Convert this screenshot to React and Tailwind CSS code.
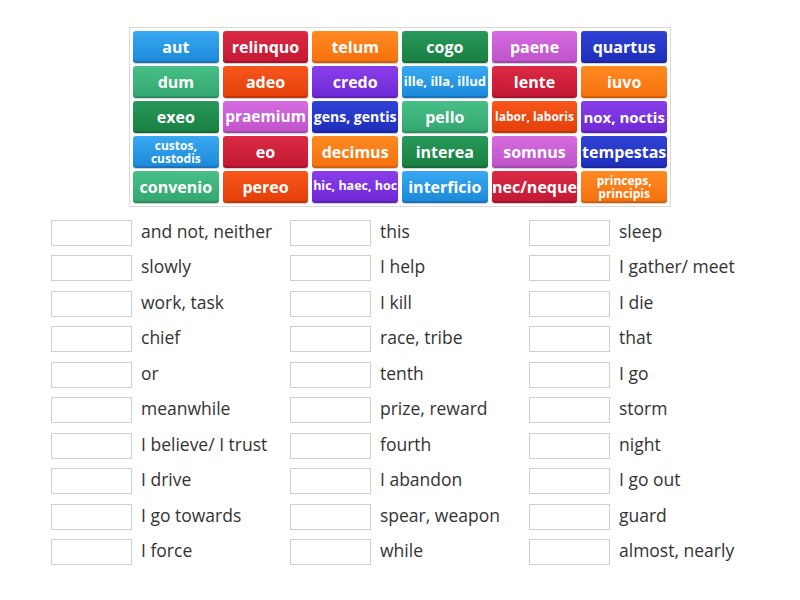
import React from 'react'

const colors = {
  blue: 'from-[#38a9f2] to-[#1b88d8]',
  red: 'from-[#dc2a45] to-[#c21733]',
  orange: 'from-[#ff8a22] to-[#f5700a]',
  dgreen: 'from-[#27995a] to-[#197f42]',
  pink: 'from-[#d66ce0] to-[#bf52ca]',
  dblue: 'from-[#2e42d4] to-[#1f2dbb]',
  lgreen: 'from-[#48bf88] to-[#33a66f]',
  ored: 'from-[#f8561c] to-[#e43e08]',
  purple: 'from-[#8a3eea] to-[#6e27d6]',
}

const tiles = [
  ['aut', 'blue'], ['relinquo', 'red'], ['telum', 'orange'], ['cogo', 'dgreen'], ['paene', 'pink'], ['quartus', 'dblue'],
  ['dum', 'lgreen'], ['adeo', 'ored'], ['credo', 'purple'], ['ille, illa, illud', 'blue', 'text-[13px]'], ['lente', 'red'], ['iuvo', 'orange'],
  ['exeo', 'dgreen'], ['praemium', 'pink', 'text-[15.5px]'], ['gens, gentis', 'dblue', 'text-[14px]'], ['pello', 'lgreen'], ['labor, laboris', 'ored', 'text-[12px]'], ['nox, noctis', 'purple', 'text-[15px]'],
  ['custos, custodis', 'blue', 'text-[12px] leading-[13px]'], ['eo', 'red'], ['decimus', 'orange'], ['interea', 'dgreen'], ['somnus', 'pink'], ['tempestas', 'dblue'],
  ['convenio', 'lgreen'], ['pereo', 'ored'], ['hic, haec, hoc', 'purple', 'text-[12.5px]'], ['interficio', 'blue'], ['nec/neque', 'red'], ['princeps, principis', 'orange', 'text-[12px] leading-[13px]'],
]

const columns = [
  ['and not, neither', 'slowly', 'work, task', 'chief', 'or', 'meanwhile', 'I believe/ I trust', 'I drive', 'I go towards', 'I force'],
  ['this', 'I help', 'I kill', 'race, tribe', 'tenth', 'prize, reward', 'fourth', 'I abandon', 'spear, weapon', 'while'],
  ['sleep', 'I gather/ meet', 'I die', 'that', 'I go', 'storm', 'night', 'I go out', 'guard', 'almost, nearly'],
]

function Tile({ word, color, size }) {
  return (
    <div className={`flex items-center justify-center h-[31.5px] rounded-[3px] bg-gradient-to-b ${colors[color]} text-white font-bold text-center px-0.5 shadow-[inset_0_-2px_0_rgba(0,0,0,0.15),0_1px_1px_rgba(0,0,0,0.2)] ${size || 'text-[16px]'}`}>
      <span className={size && size.includes('leading') ? 'px-3' : 'whitespace-nowrap'}>{word}</span>
    </div>
  )
}

export default function App() {
  return (
    <div className="w-[800px] h-[600px] bg-white pt-[27px] font-['Open_Sans',sans-serif]">
      <div className="mx-auto w-[542px] border border-[#d8d8d8] p-[3px] pb-[3px]">
        <div className="grid grid-cols-6 gap-x-[4px] gap-y-[3.5px]">
          {tiles.map(([w, c, s]) => <Tile key={w} word={w} color={c} size={s} />)}
        </div>
      </div>
      <div className="flex pl-[51px] pt-[13px] gap-[9px]">
        {columns.map((col, i) => (
          <div key={i} className="w-[230px] flex flex-col gap-[9.5px]">
            {col.map(t => (
              <div key={t} className="flex items-center h-[26px]">
                <div className="w-[81px] h-[26px] border border-[#cfcfcf] bg-white shrink-0" />
                <span className="ml-[9px] text-[17.5px] text-[#333333] leading-none pb-[2px] whitespace-nowrap">{t}</span>
              </div>
            ))}
          </div>
        ))}
      </div>
    </div>
  )
}
